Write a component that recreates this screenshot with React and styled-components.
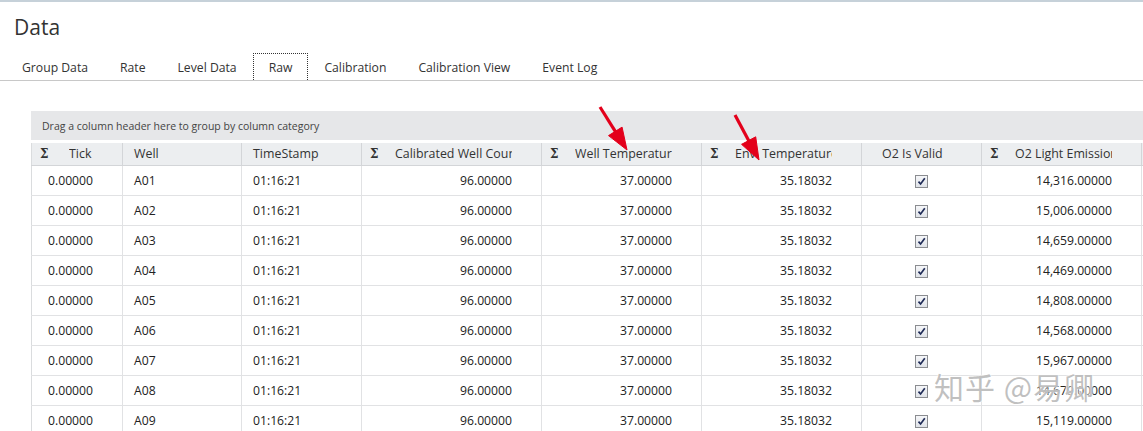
import React from 'react';
import styled, { createGlobalStyle } from 'styled-components';

const GlobalStyle = createGlobalStyle`
  html, body {
    margin: 0;
    padding: 0;
    background: #fff;
    overflow: hidden;
  }
  body {
    font-family: 'Open Sans', 'Noto Sans', sans-serif;
    color: #333;
  }
`;

const Page = styled.div`
  position: relative;
  width: 1143px;
  height: 431px;
  border-top: 2px solid #c6d1d9;
  box-sizing: border-box;
  overflow: hidden;
`;

const Title = styled.h1`
  margin: 11px 0 0 14px;
  font-size: 21px;
  line-height: 28px;
  font-weight: 400;
  color: #333;
`;

const TabBar = styled.div`
  display: flex;
  margin-top: 12px;
  padding-left: 6px;
  border-bottom: 1px solid #c8c8c8;
`;

const Tab = styled.div`
  height: 27px;
  box-sizing: border-box;
  display: flex;
  align-items: center;
  padding: 1px 15px 0;
  border: 1px dotted ${p => (p.$active ? '#333' : 'transparent')};
  border-bottom: none;
  font-size: 12.2px;
  color: #333;
  cursor: pointer;
`;

const Content = styled.div`
  padding: 30px 0 0 31px;
`;

const GroupPanel = styled.div`
  height: 29px;
  width: 1200px;
  box-sizing: border-box;
  display: flex;
  align-items: center;
  padding-left: 11px;
  background: #e6e7e9;
  font-size: 10.5px;
  color: #444;
  margin-bottom: 3px;
`;

const Grid = styled.table`
  border-collapse: collapse;
  table-layout: fixed;
  width: ${p => p.$width}px;
  border-left: 1px solid #dadcde;
`;

const HeadCell = styled.th`
  height: 22px;
  box-sizing: border-box;
  padding: 0 ${p => p.$padRight}px 0 0;
  background: #eceef0;
  border-right: 1px solid #d3d5d8;
  border-bottom: 1px solid #d3d5d8;
  font-weight: 400;
  font-size: 12.4px;
  color: #333;
  text-align: left;
  white-space: nowrap;
  overflow: hidden;
`;

const HeadInner = styled.div`
  display: flex;
  align-items: center;
  overflow: hidden;
`;

const Sigma = styled.span`
  width: ${p => p.$width}px;
  flex: none;
  padding-left: 8px;
  box-sizing: border-box;
  font-family: 'DejaVu Serif', serif;
  font-weight: 700;
  font-size: 12px;
  color: #333;
`;

const HeadLabel = styled.span`
  flex: 1;
  min-width: 0;
  overflow: hidden;
  white-space: nowrap;
  padding-left: ${p => p.$padLeft}px;
`;

const Cell = styled.td`
  height: 30px;
  box-sizing: border-box;
  padding: 0 ${p => p.$padRight}px 0 ${p => p.$padLeft}px;
  border-right: 1px solid #e1e2e4;
  border-bottom: 1px solid #e1e2e4;
  font-size: 12.2px;
  color: #222;
  text-align: ${p => p.$align};
  white-space: nowrap;
  overflow: hidden;
`;

const Check = styled.span`
  display: inline-flex;
  width: 13px;
  height: 13px;
  box-sizing: border-box;
  border: 1px solid #8a8c90;
  background: linear-gradient(#f6f7f9, #dfe2e8);
  vertical-align: middle;
  align-items: center;
  justify-content: center;
`;

const Overlay = styled.svg`
  position: absolute;
  left: 0;
  top: -2px;
  pointer-events: none;
`;

const Watermark = styled.div`
  position: absolute;
  left: 934px;
  top: 362px;
  font-family: 'Noto Sans CJK SC', sans-serif;
  font-size: 30px;
  letter-spacing: 1px;
  color: rgba(130, 130, 130, 0.5);
  text-shadow: 0 0 2px #fff, 0 0 2px #fff;
  pointer-events: none;
  white-space: nowrap;
`;

const tabs = ['Group Data', 'Rate', 'Level Data', 'Raw', 'Calibration', 'Calibration View', 'Event Log'];

const columns = [
  { key: 'tick', label: 'Tick', sigma: true, width: 91, sigmaWidth: 37, align: 'left', padLeft: 16, padRight: 0 },
  { key: 'well', label: 'Well', width: 119, align: 'left', padLeft: 11, padRight: 0 },
  { key: 'time', label: 'TimeStamp', width: 120, align: 'left', padLeft: 11, padRight: 0 },
  { key: 'cal', label: 'Calibrated Well Count', sigma: true, width: 180, align: 'right', padLeft: 0, padRight: 29 },
  { key: 'wt', label: 'Well Temperature', sigma: true, width: 160, align: 'right', padLeft: 0, padRight: 29 },
  { key: 'env', label: 'Env. Temperature', sigma: true, width: 160, align: 'right', padLeft: 0, padRight: 29 },
  { key: 'valid', label: 'O2 Is Valid', width: 120, align: 'center', padLeft: 0, padRight: 0, headPad: 20 },
  { key: 'o2', label: 'O2 Light Emission', sigma: true, width: 160, align: 'right', padLeft: 0, padRight: 29 },
  { key: 'extra', label: 'O2 Reading', sigma: true, width: 70, align: 'right', padLeft: 0, padRight: 29 },
];

const tableWidth = columns.reduce((s, c) => s + c.width, 0);

const o2 = ['14,316', '15,006', '14,659', '14,469', '14,808', '14,568', '15,967', '14,679', '15,119'];

const rows = o2.map((v, i) => ({
  tick: '0.00000',
  well: 'A0' + (i + 1),
  time: '01:16:21',
  cal: '96.00000',
  wt: '37.00000',
  env: '35.18032',
  valid: true,
  o2: v + '.00000',
  extra: '',
}));

function Arrow({ x1, y1, x2, y2 }) {
  const dx = x2 - x1;
  const dy = y2 - y1;
  const len = Math.sqrt(dx * dx + dy * dy);
  const ux = dx / len;
  const uy = dy / len;
  const bx = x2 - ux * 22;
  const by = y2 - uy * 22;
  const px = -uy * 8;
  const py = ux * 8;
  return (
    <g fill="#e3001b" stroke="#e3001b">
      <line x1={x1} y1={y1} x2={bx + ux * 2} y2={by + uy * 2} strokeWidth="3.2" />
      <polygon points={`${x2},${y2} ${bx + px},${by + py} ${bx - px},${by - py}`} strokeWidth="1" />
    </g>
  );
}

function CheckBox() {
  return (
    <Check>
      <svg width="9" height="9" viewBox="0 0 9 9">
        <path d="M1.5 4.6 L3.6 7 L7.8 1.3" fill="none" stroke="#1f2b57" strokeWidth="1.7" />
      </svg>
    </Check>
  );
}

export default function App() {
  return (
    <Page>
      <GlobalStyle />
      <Title>Data</Title>
      <TabBar>
        {tabs.map(t => (
          <Tab key={t} $active={t === 'Raw'}>{t}</Tab>
        ))}
      </TabBar>
      <Content>
        <GroupPanel>Drag a column header here to group by column category</GroupPanel>
        <Grid $width={tableWidth}>
          <colgroup>
            {columns.map(c => (
              <col key={c.key} style={{ width: c.width }} />
            ))}
          </colgroup>
          <thead>
            <tr>
              {columns.map(c => (
                <HeadCell key={c.key} $padRight={c.sigma ? 29 : 0}>
                  <HeadInner>
                    {c.sigma && <Sigma $width={c.sigmaWidth || 33}>Σ</Sigma>}
                    <HeadLabel $padLeft={c.sigma ? 0 : c.headPad || 11}>{c.label}</HeadLabel>
                  </HeadInner>
                </HeadCell>
              ))}
            </tr>
          </thead>
          <tbody>
            {rows.map(r => (
              <tr key={r.well}>
                {columns.map(c => (
                  <Cell key={c.key} $align={c.align} $padLeft={c.padLeft} $padRight={c.padRight}>
                    {c.key === 'valid' ? <CheckBox /> : r[c.key]}
                  </Cell>
                ))}
              </tr>
            ))}
          </tbody>
        </Grid>
      </Content>
      <Overlay width="1143" height="431">
        <Arrow x1={600} y1={107} x2={627} y2={150} />
        <Arrow x1={735} y1={115} x2={759} y2={160} />
      </Overlay>
      <Watermark>知乎 @易卿</Watermark>
    </Page>
  );
}
